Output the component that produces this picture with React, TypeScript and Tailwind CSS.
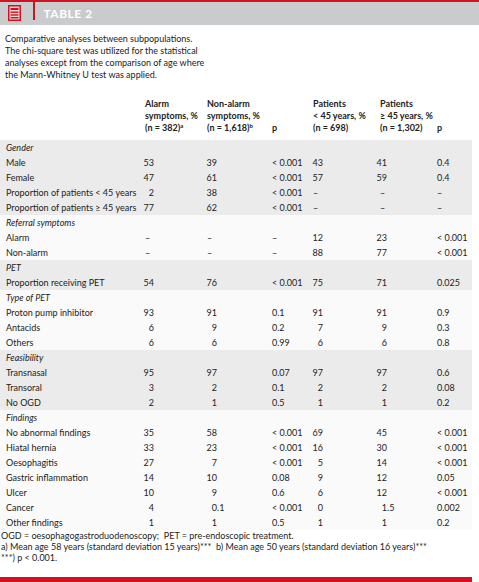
import type { ReactNode } from "react";

type Cell = string;
type Row = { label: string; vals?: Cell[] };
type Section = { title: string; shade: "gray" | "light"; rows: Row[] };

const sections: Section[] = [
  {
    title: "Gender",
    shade: "gray",
    rows: [
      { label: "Male", vals: ["53", "39", "< 0.001", "43", "41", "0.4"] },
      { label: "Female", vals: ["47", "61", "< 0.001", "57", "59", "0.4"] },
      { label: "Proportion of patients < 45 years", vals: ["2", "38", "< 0.001", "–", "–", "–"] },
      { label: "Proportion of patients ≥ 45 years", vals: ["77", "62", "< 0.001", "–", "–", "–"] },
    ],
  },
  {
    title: "Referral symptoms",
    shade: "light",
    rows: [
      { label: "Alarm", vals: ["–", "–", "–", "12", "23", "< 0.001"] },
      { label: "Non-alarm", vals: ["–", "–", "–", "88", "77", "< 0.001"] },
    ],
  },
  {
    title: "PET",
    shade: "gray",
    rows: [{ label: "Proportion receiving PET", vals: ["54", "76", "< 0.001", "75", "71", "0.025"] }],
  },
  {
    title: "Type of PET",
    shade: "light",
    rows: [
      { label: "Proton pump inhibitor", vals: ["93", "91", "0.1", "91", "91", "0.9"] },
      { label: "Antacids", vals: ["6", "9", "0.2", "7", "9", "0.3"] },
      { label: "Others", vals: ["6", "6", "0.99", "6", "6", "0.8"] },
    ],
  },
  {
    title: "Feasibility",
    shade: "gray",
    rows: [
      { label: "Transnasal", vals: ["95", "97", "0.07", "97", "97", "0.6"] },
      { label: "Transoral", vals: ["3", "2", "0.1", "2", "2", "0.08"] },
      { label: "No OGD", vals: ["2", "1", "0.5", "1", "1", "0.2"] },
    ],
  },
  {
    title: "Findings",
    shade: "light",
    rows: [
      { label: "No abnormal findings", vals: ["35", "58", "< 0.001", "69", "45", "< 0.001"] },
      { label: "Hiatal hernia", vals: ["33", "23", "< 0.001", "16", "30", "< 0.001"] },
      { label: "Oesophagitis", vals: ["27", "7", "< 0.001", "5", "14", "< 0.001"] },
      { label: "Gastric inflammation", vals: ["14", "10", "0.08", "9", "12", "0.05"] },
      { label: "Ulcer", vals: ["10", "9", "0.6", "6", "12", "< 0.001"] },
      { label: "Cancer", vals: ["4", "0.1", "< 0.001", "0", "1.5", "0.002"] },
      { label: "Other findings", vals: ["1", "1", "0.5", "1", "1", "0.2"] },
    ],
  },
];

const grid = "grid grid-cols-[145px_62px_65px_41px_67px_57px_35px]";

// decimal aligned number: integer part pushed to the right of a fixed box
function Num({ v, w }: { v: string; w: string }) {
  if (v === "–") return <span>–</span>;
  const [i, f] = v.split(".");
  return (
    <div className="flex">
      <span className={`flex shrink-0 justify-end ${w}`}>{i}</span>
      {f !== undefined && <span>.{f}</span>}
    </div>
  );
}

function TableIcon() {
  return (
    <svg width="13" height="16" viewBox="0 0 13 16" className="shrink-0">
      <rect x="0.75" y="0.75" width="11.5" height="14.5" fill="#f3d4d6" stroke="#d2121f" strokeWidth="1.5" />
      <rect x="2.5" y="3" width="8" height="2" fill="#d2121f" />
      <rect x="2.5" y="6.5" width="8" height="1.4" fill="#d2121f" />
      <rect x="2.5" y="9.3" width="8" height="1.4" fill="#d2121f" />
      <rect x="2.5" y="12" width="8" height="1.4" fill="#d2121f" />
    </svg>
  );
}

function Head({ children }: { children: ReactNode }) {
  return <div className="flex flex-col justify-end">{children}</div>;
}

export default function App() {
  return (
    <div
      className="relative h-[582px] w-[479px] overflow-hidden bg-white text-[9px] leading-[12px] text-[#222]"
      style={{ fontFamily: "Lato, 'Open Sans', sans-serif" }}
    >
      <div className="h-[2px] bg-[#d2121f]" />
      <div className="flex h-[23px] items-start bg-[#c9cbcc]">
        <div className="ml-[8px] mt-[3px]">
          <TableIcon />
        </div>
        <div className="ml-[12px] h-[18px] w-[1.5px] bg-[#d2121f]" />
        <span className="ml-[9px] mt-[5px] text-[12px] font-bold leading-[14px] tracking-[0.5px] text-white">
          TABLE 2
        </span>
      </div>

      <p className="mt-[8px] whitespace-nowrap pl-[5px]">
        Comparative analyses between subpopulations.
        <br />
        The chi-square test was utilized for the statistical
        <br />
        analyses except from the comparison of age where
        <br />
        the Mann-Whitney U test was applied.
      </p>

      <div className={`${grid} mt-[16px] h-[43px] pb-[6px] font-bold`}>
        <div />
        <Head>
          <span>Alarm</span>
          <span>symptoms, %</span>
          <span>
            (n = 382)<sup className="text-[6px]">a</sup>
          </span>
        </Head>
        <Head>
          <span>Non-alarm</span>
          <span>symptoms, %</span>
          <span>
            (n = 1,618)<sup className="text-[6px]">b</sup>
          </span>
        </Head>
        <Head>
          <span>p</span>
        </Head>
        <Head>
          <span>Patients</span>
          <span>&lt; 45 years, %</span>
          <span>(n = 698)</span>
        </Head>
        <Head>
          <span>Patients</span>
          <span>≥ 45 years, %</span>
          <span>(n = 1,302)</span>
        </Head>
        <Head>
          <span>p</span>
        </Head>
      </div>

      <div className="w-[472px]">
        {sections.map((s) => (
          <div key={s.title} className={s.shade === "gray" ? "bg-[#ebebeb]" : "bg-[#fafafa]"}>
            <div className="flex h-[15px] items-center pl-[6px] italic">{s.title}</div>
            {s.rows.map((r) => (
              <div key={r.label} className={`${grid} h-[15px] items-center`}>
                <span className="whitespace-nowrap pl-[6px]">{r.label}</span>
                <Num v={r.vals![0]} w="w-[9px]" />
                <Num v={r.vals![1]} w="w-[10px]" />
                <span className="whitespace-nowrap">{r.vals![2]}</span>
                <Num v={r.vals![3]} w="w-[10px]" />
                <Num v={r.vals![4]} w="w-[7px]" />
                <span className="whitespace-nowrap">{r.vals![5]}</span>
              </div>
            ))}
          </div>
        ))}
      </div>

      <div className="pl-[1px] leading-[11px]">
        <p className="whitespace-pre">OGD = oesophagogastroduodenoscopy;  PET = pre-endoscopic treatment.</p>
        <p className="whitespace-pre">
          a) Mean age 58 years (standard deviation 15 years)***  b) Mean age 50 years (standard deviation 16 years)***
        </p>
        <p>***) p &lt; 0.001.</p>
      </div>

      <div className="mt-[14px] h-[6px] w-[472px] bg-[#d2121f]" />
    </div>
  );
}
